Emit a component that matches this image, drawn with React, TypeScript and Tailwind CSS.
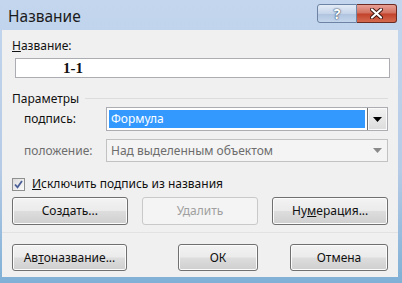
const font = "font-['Noto_Sans','Open_Sans',sans-serif]";

function Btn({
  children,
  w,
  h = "h-[28px]",
  disabled,
}: {
  children: React.ReactNode;
  w: string;
  h?: string;
  disabled?: boolean;
}) {
  return (
    <div
      className={`${w} ${h} flex items-center justify-center rounded-[3px] border text-[12px] ${
        disabled
          ? "border-[#c9c9c9] bg-[#f4f4f4] text-[#a0a0a0]"
          : "border-[#707070] bg-[linear-gradient(#f3f3f3_0%,#ebebeb_48%,#dddddd_52%,#cfcfcf_100%)] text-[#111] shadow-[inset_0_0_0_1px_#fcfcfc]"
      }`}
    >
      {children}
    </div>
  );
}

function Arrow({ grey }: { grey?: boolean }) {
  return (
    <svg width="9" height="5" viewBox="0 0 9 5">
      <path d="M0 0h9L4.5 5z" fill={grey ? "#8a8a8a" : "#000"} />
    </svg>
  );
}

export default function App() {
  return (
    <div className={`${font} flex h-[283px] w-[402px] flex-col bg-[linear-gradient(#c3d6ee,#b6cbe6_60%,#7fb0d6)] text-[#111]`}>
      {/* title bar */}
      <div className="flex h-[30px] shrink-0 items-start justify-between pl-[8px] pr-[5px]">
        <span className="mt-[5px] text-[15.5px] leading-[22px] text-[#1b1b1b]">Название</span>
        <div className="mt-[4px] flex">
          <div className="flex h-[19px] w-[40px] items-center justify-center rounded-l-[3px] border border-[#6d83a3] bg-[linear-gradient(#e3ebf6,#c6d5ea_50%,#aec3df_51%,#c4d6ec)] text-[14px] font-bold leading-none text-white [text-shadow:0_0_2px_#2b3f5c,0_0_1px_#2b3f5c]">
            ?
          </div>
          <div className="flex h-[19px] w-[40px] items-center justify-center rounded-r-[3px] border border-l-0 border-[#6b2a22] bg-[linear-gradient(#e8a194,#d2705f_48%,#c2412b_52%,#d46a4f)]">
            <svg width="13" height="11" viewBox="0 0 13 11">
              <path
                d="M2 1.5l9 8M11 1.5l-9 8"
                stroke="#3a1510"
                strokeWidth="4"
                strokeLinecap="round"
              />
              <path
                d="M2 1.5l9 8M11 1.5l-9 8"
                stroke="#fff"
                strokeWidth="2.2"
                strokeLinecap="round"
              />
            </svg>
          </div>
        </div>
      </div>

      {/* client area */}
      <div className="mb-[6px] ml-[2px] mr-[4px] flex flex-1 flex-col bg-[#f0f0f0] px-[10px] text-[12px]">
        <div className="mt-[7px] h-[17px] leading-[17px]">
          <u>Н</u>азвание:
        </div>
        <div className="ml-[3px] mt-[4px] flex h-[20px] w-[375px] items-center border border-[#abadb3] bg-white pl-[47px] font-['Liberation_Serif',serif] text-[15px] font-bold">
          1-1
        </div>

        <div className="mt-[12px] flex h-[17px] items-center">
          <span className="leading-[17px]">Параметры</span>
          <div className="ml-[6px] h-px flex-1 bg-[#dcdcdc]" />
        </div>

        <div className="flex h-[24px] items-center pl-[12px]">
          <span className="w-[82px]">
            по<u>д</u>пись:
          </span>
          <div className="flex h-[24px] flex-1 border border-[#abadb3] bg-white">
            <div className="m-[2px] flex flex-1 items-center bg-[#3399ff] pl-[2px] text-white">
              Формула
            </div>
            <div className="flex w-[20px] items-center justify-center border-l border-[#707070] bg-[linear-gradient(#f2f2f2,#dcdcdc)] shadow-[inset_0_0_0_1px_#fafafa]">
              <Arrow />
            </div>
          </div>
        </div>

        <div className="mt-[8px] flex h-[23px] items-center pl-[12px] text-[#6d6d6d]">
          <span className="w-[82px]">положение:</span>
          <div className="flex h-[23px] flex-1 border border-[#c2c2c2] bg-[#f4f4f4]">
            <div className="flex flex-1 items-center pl-[4px]">Над выделенным объектом</div>
            <div className="flex w-[20px] items-center justify-center">
              <Arrow grey />
            </div>
          </div>
        </div>

        <div className="mt-[14px] flex h-[16px] items-center">
          <div className="flex h-[13px] w-[13px] items-center justify-center border border-[#8e8f8f] bg-[linear-gradient(135deg,#dcdcdc,#fbfbfb)]">
            <svg width="9" height="9" viewBox="0 0 9 9">
              <path d="M1 4.5l2.5 2.8L8 1" fill="none" stroke="#4a5f97" strokeWidth="1.8" />
            </svg>
          </div>
          <span className="ml-[7px] leading-[16px]">
            <u>И</u>сключить подпись из названия
          </span>
        </div>

        <div className="mt-[5px] flex gap-[14px]">
          <Btn w="w-[116px]">
            Соз<u>д</u>ать...
          </Btn>
          <Btn w="w-[117px]" disabled>
            Удалить
          </Btn>
          <Btn w="w-[116px]">
            Ну<u>м</u>ерация...
          </Btn>
        </div>

        <div className="-mx-[10px] mt-[7px] h-px bg-[#e2e2e2]" />

        <div className="mt-[11px] flex">
          <Btn w="w-[116px]" h="h-[27px]">
            Ав<u>т</u>оназвание...
          </Btn>
          <div className="ml-[51px]">
            <Btn w="w-[80px]" h="h-[27px]">
              ОК
            </Btn>
          </div>
          <div className="ml-[32px]">
            <Btn w="w-[98px]" h="h-[27px]">
              Отмена
            </Btn>
          </div>
        </div>
      </div>
    </div>
  );
}
